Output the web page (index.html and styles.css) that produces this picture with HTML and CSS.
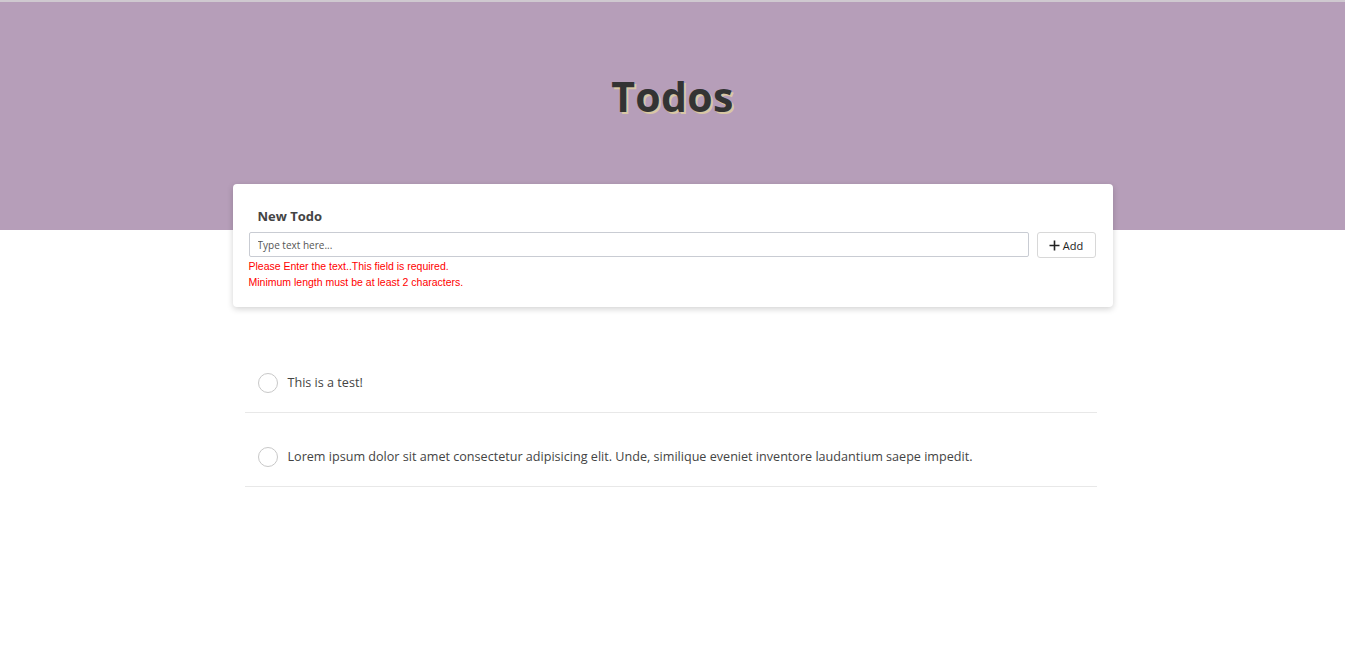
FILE: index.html
```html
<!DOCTYPE html>
<html lang="en">
<head>
  <meta charset="UTF-8" />
  <title>Todos</title>
  <link rel="stylesheet" href="styles.css">
</head>
<body>
  <header class="hero">
    <h1 class="title">Todos</h1>
  </header>
  <main class="wrap">
    <form class="card">
      <label class="card-label" for="todoText">New Todo</label>
      <div class="row">
        <input id="todoText" class="text-input" type="text" placeholder="Type text here...">
        <button type="button" class="add-btn">
          <svg width="11" height="11" viewBox="0 0 11 11"><path d="M5.5 0.5v10M0.5 5.5h10" stroke="#222" stroke-width="1.6"/></svg>
          Add
        </button>
      </div>
      <div class="error">Please Enter the text..This field is required.</div>
      <div class="error">Minimum length must be at least 2 characters.</div>
    </form>
    <ul class="todo-list">
      <li class="todo"><span class="check"></span><span class="todo-text">This is a test!</span></li>
      <li class="todo"><span class="check"></span><span class="todo-text">Lorem ipsum dolor sit amet consectetur adipisicing elit. Unde, similique eveniet inventore laudantium saepe impedit.</span></li>
    </ul>
  </main>
</body>
</html>
```

FILE: styles.css
```css
body { margin: 0; background: #fff; font-family: "Open Sans", "Noto Sans", sans-serif; color: #333; }
.hero { background: #b69eb9; border-top: 2px solid #cfc9d0; height: 228px; box-sizing: content-box; display: flex; justify-content: center; }
.title { margin: 66px 0 0; font-size: 41px; font-weight: 700; color: #333; text-shadow: 2px 2px 0 #d8c7a5; letter-spacing: 0.3px; height: 56px; line-height: 56px; }
.wrap { width: 880px; margin: -46px auto 0; }
.card { background: #fff; border-radius: 4px; box-shadow: 0 2px 6px rgba(0,0,0,0.18); padding: 23px 17px 17px 16px; display: flex; flex-direction: column; }
.card-label { font-size: 13px; font-weight: 700; color: #444; margin: 0 0 7px 9px; line-height: 18px; }
.row { display: flex; gap: 8px; }
.text-input { flex: 1; height: 25px; box-sizing: border-box; border: 1px solid #c9ccd3; border-radius: 2px; padding: 0 8px; font-family: "Open Sans", sans-serif; font-size: 10px; color: #555; outline: none; }
.text-input::placeholder { color: #555; }
.add-btn { width: 59px; height: 26px; background: #fff; border: 1px solid #d8d8d8; border-radius: 3px; font-family: "Open Sans", sans-serif; font-size: 11px; color: #222; display: flex; align-items: center; justify-content: center; gap: 3px; padding: 0; cursor: pointer; }
.error { font-family: "Liberation Sans", Arial, sans-serif; font-size: 10.5px; color: #f00; line-height: 16px; }
.error:first-of-type { margin-top: 1px; }
.todo-list { list-style: none; margin: 32px 16px 0 12px; padding: 0; }
.todo { display: flex; align-items: center; height: 74px; box-sizing: border-box; padding: 14px 0 0 13px; border-bottom: 1px solid #e8e8e8; }
.check { width: 18px; height: 18px; border: 1px solid #c8c8c8; border-radius: 50%; margin-right: 10px; flex: none; }
.todo-text { font-size: 12.6px; color: #444; }
```
